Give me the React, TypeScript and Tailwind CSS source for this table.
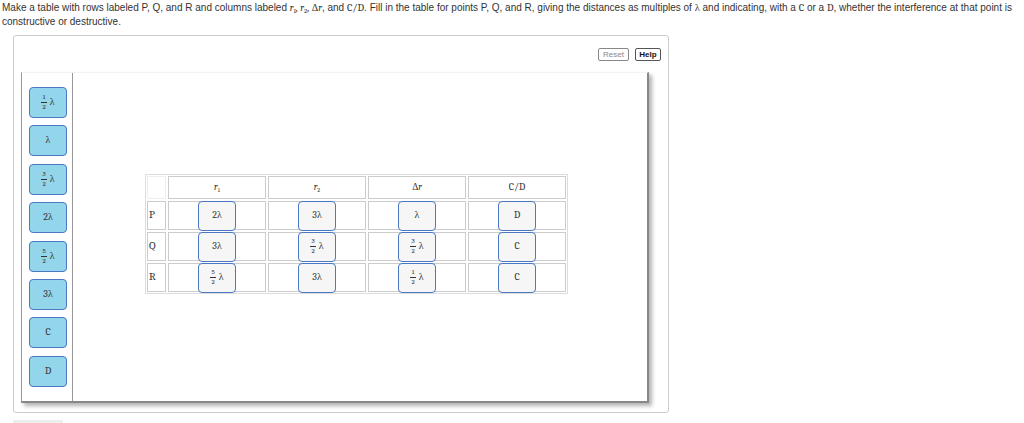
const serif = "font-serif font-normal";

const Frac = ({ n, d }: { n: string; d: string }) => (
  <span className="inline-flex flex-col items-center align-middle leading-none text-[7px] mr-[3px]">
    <span className="px-[1px]">{n}</span>
    <span className="w-full h-px bg-[#333] my-[1px]" />
    <span className="px-[1px]">{d}</span>
  </span>
);

type Val = { n?: string; d?: string; t: string };

const Value = ({ v }: { v: Val }) => (
  <span className={`${serif} inline-flex items-center text-[10px] text-[#333]`}>
    {v.n && v.d ? <Frac n={v.n} d={v.d} /> : null}
    {v.t}
  </span>
);

const palette: Val[] = [
  { n: "1", d: "2", t: "λ" },
  { t: "λ" },
  { n: "3", d: "2", t: "λ" },
  { t: "2λ" },
  { n: "5", d: "2", t: "λ" },
  { t: "3λ" },
  { t: "C" },
  { t: "D" },
];

const rows: { label: string; cells: Val[] }[] = [
  { label: "P", cells: [{ t: "2λ" }, { t: "3λ" }, { t: "λ" }, { t: "D" }] },
  {
    label: "Q",
    cells: [{ t: "3λ" }, { n: "3", d: "2", t: "λ" }, { n: "3", d: "2", t: "λ" }, { t: "C" }],
  },
  {
    label: "R",
    cells: [{ n: "5", d: "2", t: "λ" }, { t: "3λ" }, { n: "1", d: "2", t: "λ" }, { t: "C" }],
  },
];

const Chip = ({ v }: { v: Val }) => (
  <div className="w-[38px] h-[30px] -my-[1px] flex items-center justify-center rounded-[4px] border border-[#4a78c2] bg-[#f6f6f6]">
    <Value v={v} />
  </div>
);

const Tile = ({ v }: { v: Val }) => (
  <div className="w-[38px] h-[31px] flex items-center justify-center rounded-[4px] border border-[#4a78c2] bg-[#93d5ea]">
    <Value v={v} />
  </div>
);

const App = () => {
  return (
    <div className="w-[1024px] h-[423px] bg-white text-[#333] font-['Liberation_Sans',Arial,sans-serif] overflow-hidden">
      <p className="px-[2px] pt-[1px] text-[10px] leading-[13px]">
        Make a table with rows labeled P, Q, and R and columns labeled{" "}
        <span className="font-serif italic text-[10px]">
          r<sub className="text-[7px] not-italic">1</sub>, r<sub className="text-[7px] not-italic">2</sub>,{" "}
          <span className="not-italic">Δ</span>r
        </span>
        , and <span className="font-serif text-[10.5px]">C/D</span>. Fill in the table for points P, Q, and R, giving
        the distances as multiples of <span className="font-serif text-[10.5px]">λ</span> and indicating, with a{" "}
        <span className="font-serif text-[10.5px]">C</span> or a <span className="font-serif text-[10.5px]">D</span>,
        whether the interference at that point is constructive or destructive.
      </p>

      <div className="ml-[13px] mt-[7px] w-[656px] h-[378px] border border-[#ccc] rounded-[3px] pl-[7px] pt-[12px]">
        <div className="w-[640px] flex justify-end gap-[6px]">
          <button className="h-[13px] w-[31px] border border-[#888] rounded-[2px] text-[8px] leading-none text-[#888] bg-white">
            Reset
          </button>
          <button className="h-[13px] w-[26px] border border-[#555] rounded-[2px] text-[8px] leading-none font-bold text-[#111] bg-white">
            Help
          </button>
        </div>

        <div className="mt-[11px] w-[628px] h-[331px] flex border-t border-t-[#f2f2f2] border-l border-l-[#999] border-r-2 border-r-[#888] border-b-2 border-b-[#888] shadow-[3px_3px_4px_rgba(0,0,0,0.3)]">
          <div className="w-[51px] shrink-0 border-r border-[#999] pl-[7px] pt-[14px] flex flex-col gap-[7.4px]">
            {palette.map((v, i) => (
              <Tile key={i} v={v} />
            ))}
          </div>

          <div className="flex-1 pl-[72px] pt-[101px]">
            <div className="w-[423px] border border-[#ddd] p-[1px] grid grid-cols-[19px_98px_98px_98px_98px] gap-[2px]">
              <div className="h-[23px] border border-[#eee]" />
              {["r1", "r2", "dr", "cd"].map((h) => (
                <div key={h} className="h-[23px] border border-[#ccc] flex items-center justify-center font-serif text-[9.5px]">
                  {h === "r1" && (
                    <span className="italic">
                      r<sub className="text-[6px] not-italic">1</sub>
                    </span>
                  )}
                  {h === "r2" && (
                    <span className="italic">
                      r<sub className="text-[6px] not-italic">2</sub>
                    </span>
                  )}
                  {h === "dr" && (
                    <span>
                      Δ<span className="italic">r</span>
                    </span>
                  )}
                  {h === "cd" && <span className="text-[10px]">C/D</span>}
                </div>
              ))}
              {rows.map((r) => (
                <div key={r.label} className="contents">
                  <div className="h-[29px] border border-[#ccc] flex items-center pl-[1px] font-serif text-[11px] text-[#333]">
                    {r.label}
                  </div>
                  {r.cells.map((c, i) => (
                    <div key={i} className="h-[29px] border border-[#ccc] flex items-center justify-center">
                      <Chip v={c} />
                    </div>
                  ))}
                </div>
              ))}
            </div>
          </div>
        </div>
      </div>
      <div className="ml-[13px] mt-[7px] w-[50px] h-[3px] bg-[#eee]" />
    </div>
  );
};

export default App;
